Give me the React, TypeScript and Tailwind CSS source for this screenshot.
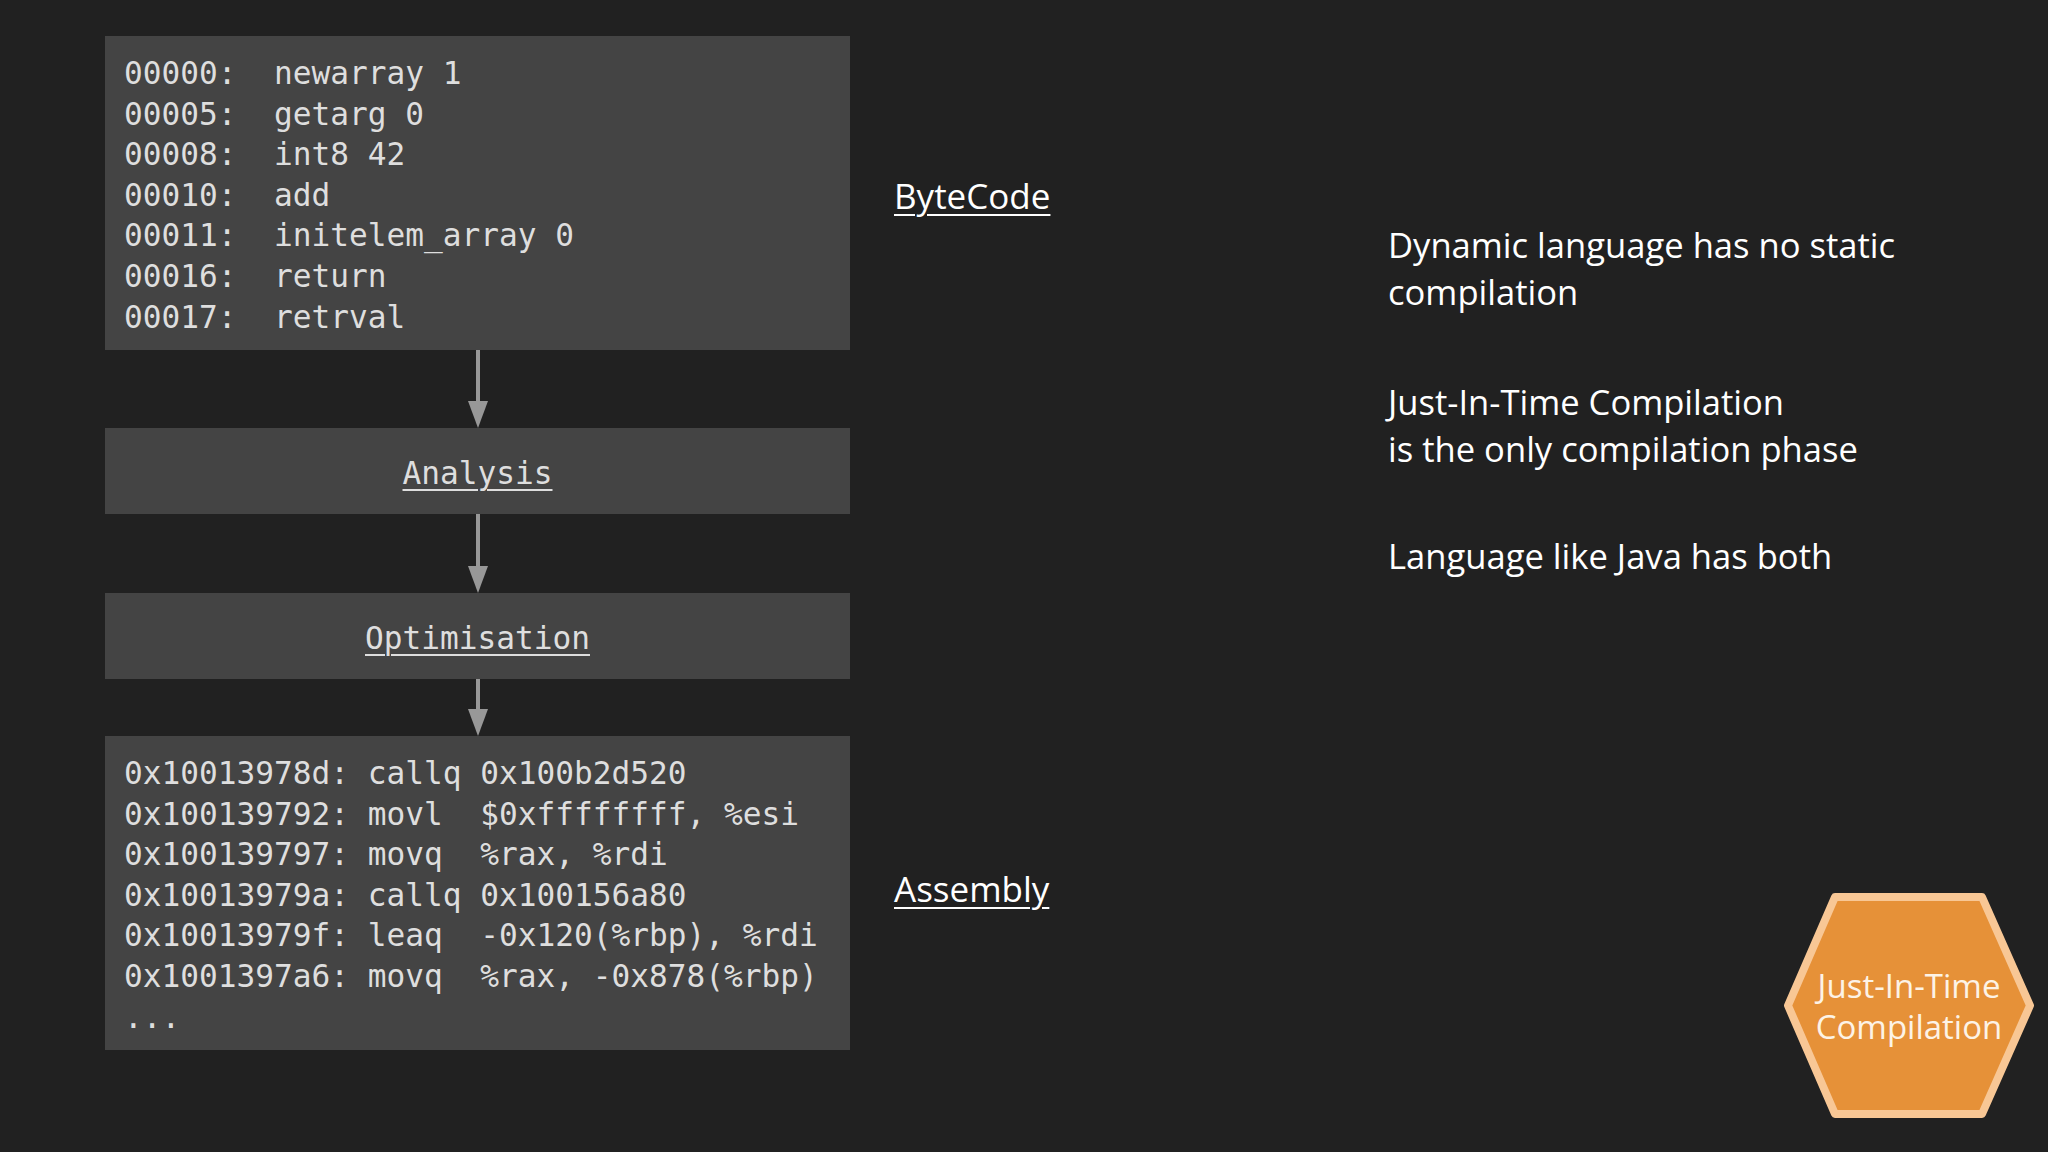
const MONO = "font-['DejaVu_Sans_Mono',monospace]";

const bytecode = `00000:  newarray 1
00005:  getarg 0
00008:  int8 42
00010:  add
00011:  initelem_array 0
00016:  return
00017:  retrval`;

const assembly = `0x10013978d: callq 0x100b2d520
0x100139792: movl  $0xffffffff, %esi
0x100139797: movq  %rax, %rdi
0x10013979a: callq 0x100156a80
0x10013979f: leaq  -0x120(%rbp), %rdi
0x1001397a6: movq  %rax, -0x878(%rbp)
...`;

function Arrow({ height }: { height: number }) {
  return (
    <div className="flex w-[745px] justify-center">
      <svg width="22" height={height} viewBox={`0 0 22 ${height}`} className="block">
        <rect x="9" y="0" width="4" height={height - 20} fill="#989898" />
        <path d={`M1 ${height - 27} L21 ${height - 27} L11 ${height} Z`} fill="#989898" />
      </svg>
    </div>
  );
}

function CodeBox({ code, label, labelClass }: { code: string; label: string; labelClass: string }) {
  return (
    <div className="flex items-center">
      <pre className={`w-[745px] h-[314px] bg-[#444444] pl-[19px] pt-[17px] text-[31.15px] leading-[40.6px] text-[#dedede] ${MONO}`}>
        {code}
      </pre>
      <span className={`ml-[44px] text-[35px] leading-none text-white underline underline-offset-[5px] decoration-2 ${labelClass}`}>{label}</span>
    </div>
  );
}

function StepBox({ label }: { label: string }) {
  return (
    <div className={`flex h-[86px] w-[745px] items-center justify-center bg-[#444444] pt-[5px] text-[31.15px] text-[#dedede] ${MONO}`}>
      <span className="underline underline-offset-[5px] decoration-2">{label}</span>
    </div>
  );
}

export default function App() {
  return (
    <div className="relative h-[1152px] w-[2048px] overflow-hidden bg-[#212121] font-['Open_Sans',sans-serif]">
      <div className="flex">
        {/* flow diagram */}
        <div className="ml-[105px] mt-[36px] flex w-[1283px] flex-col">
          <CodeBox code={bytecode} label="ByteCode" labelClass="mt-[4px]" />
          <Arrow height={78} />
          <StepBox label="Analysis" />
          <Arrow height={79} />
          <StepBox label="Optimisation" />
          <Arrow height={57} />
          <CodeBox code={assembly} label="Assembly" labelClass="mb-[10px]" />
        </div>

        {/* notes */}
        <div className="mt-[221px] flex flex-col text-[34.6px] leading-[47px] text-white">
          <p>Dynamic language has no static<br />compilation</p>
          <p className="mt-[63px]">Just-In-Time Compilation<br />is the only compilation phase</p>
          <p className="mt-[60px]">Language like Java has both</p>
        </div>
      </div>

      {/* hexagon badge */}
      <div className="absolute left-[1783px] top-[893px] h-[225px] w-[252px]">
        <svg width="252" height="225" viewBox="0 0 252 225" className="block">
          <path
            d="M52 4 L199 4 L247 112.5 L199 221 L52 221 L5 112.5 Z"
            fill="#e69138"
            stroke="#f8c795"
            strokeWidth="8"
            strokeLinejoin="round"
          />
        </svg>
        <div className="absolute inset-0 flex flex-col items-center justify-center text-center text-[33px] leading-[41px] text-[#fdf3e6]">
          <span>Just-In-Time</span>
          <span>Compilation</span>
        </div>
      </div>
    </div>
  );
}
